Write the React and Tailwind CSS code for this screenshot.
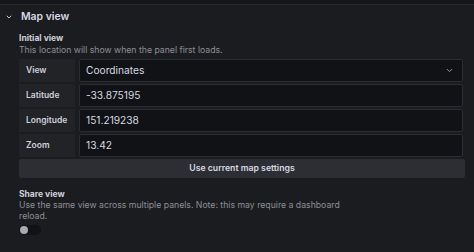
import { ChevronDown } from 'lucide-react';

const rows = [
  { label: 'Latitude', value: '-33.875195' },
  { label: 'Longitude', value: '151.219238' },
  { label: 'Zoom', value: '13.42' },
];

function Row({ label, children }) {
  return (
    <div className="flex h-[23px] gap-[4px]">
      <div className="flex w-[56px] shrink-0 items-center bg-[#212327] pl-[7px] text-[8.5px] font-semibold text-[#d0d0dc]">
        {label}
      </div>
      <div className="flex flex-1 items-center rounded-[2px] border border-[#2b2d32] bg-[#111215] pl-[6px] pr-[8px] text-[10.2px] text-[#d8d8e2]">
        {children}
      </div>
    </div>
  );
}

export default function App() {
  return (
    <div className="h-[252px] w-[474px] overflow-hidden bg-[#1b1c1f] font-['Inter',sans-serif]">
      <div className="h-[4px] bg-[#151619]"></div>
      <div className="h-px bg-[#2a2b2f]"></div>

      {/* section header */}
      <div className="flex h-[24px] items-center">
        <ChevronDown className="ml-[5px] mr-[8px] h-[8px] w-[8px] text-[#c8c8d4]" strokeWidth={3} />
        <span className="text-[10.4px] font-semibold text-[#d8d8e2]">Map view</span>
      </div>

      <div className="mr-[9px] ml-[19px] mt-[3px]">
        <div className="text-[8.5px] font-bold leading-[12px] text-[#d0d0dc]">Initial view</div>
        <div className="text-[8.7px] leading-[12px] text-[#8e8f98]">This location will show when the panel first loads.</div>

        <div className="mt-[3px] mr-[2px] flex flex-col gap-[2px]">
          <Row label="View">
            <span className="flex-1">Coordinates</span>
            <ChevronDown className="h-[9px] w-[9px] text-[#a0a1aa]" strokeWidth={2.5} />
          </Row>
          {rows.map((r) => (
            <Row key={r.label} label={r.label}>
              {r.value}
            </Row>
          ))}
        </div>

        <button className="mt-[2px] flex h-[19px] w-full items-center justify-center rounded-[2px] bg-[#2c2e33] text-[8.7px] font-semibold text-[#d8d8e2]">
          Use current map settings
        </button>

        <div className="mt-[10px] text-[8.5px] font-bold leading-[12px] text-[#d0d0dc]">Share view</div>
        <div className="w-[340px] text-[8.7px] leading-[11px] text-[#8e8f98]">
          Use the same view across multiple panels. Note: this may require a dashboard reload.
        </div>
        <div className="mt-[3px] flex h-[10px] w-[22px] items-center rounded-full bg-[#111215] pl-[1px]">
          <div className="h-[8px] w-[8px] rounded-full bg-[#a8a9b2]"></div>
        </div>
      </div>
    </div>
  );
}
